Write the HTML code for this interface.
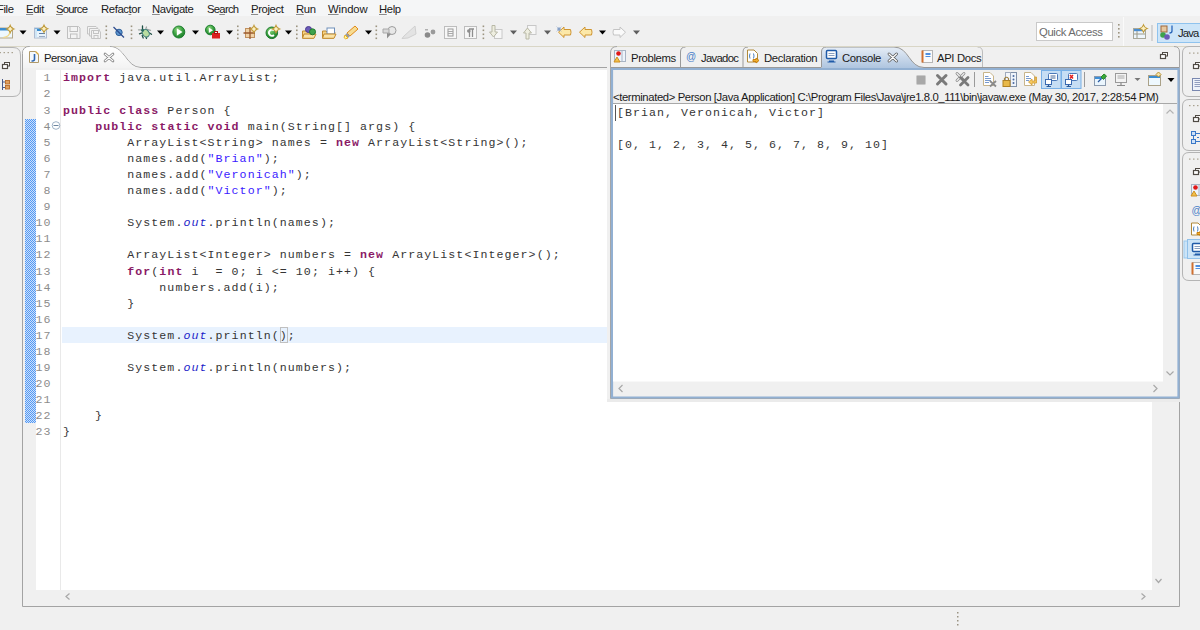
<!DOCTYPE html>
<html><head><meta charset="utf-8">
<style>
*{margin:0;padding:0;box-sizing:border-box}
html,body{width:1200px;height:630px;overflow:hidden;background:#f0f0f0;font-family:"Liberation Sans",sans-serif;font-size:11px;color:#000}
.a{position:absolute}
svg.a{left:0;top:0;overflow:visible}
.mi{position:absolute;top:2.7px;font-size:11.3px;letter-spacing:-0.4px;color:#1a1a1a;white-space:pre;line-height:13px}
.mi u{text-decoration:underline;text-decoration-color:#8a8a8a;text-underline-offset:0.6px}
.t{position:absolute;font-size:11.3px;letter-spacing:-0.35px;white-space:pre;line-height:13px;color:#1a1a1a}
#code,#lnum,#conout{position:absolute;font-family:"Liberation Mono",monospace;font-size:11.6px;letter-spacing:1.07px;line-height:16.09px;white-space:pre;color:#353535}
#code{left:63px;top:70.4px}
#lnum{left:35.5px;top:70.4px;color:#8c8c8c}
#conout{left:617px;top:105.2px;line-height:16px;letter-spacing:1.04px}
.k{color:#8a1a66;font-weight:bold}
.s{color:#3a1aff}
.f{color:#1a1ac8;font-style:italic}
</style></head><body>
<!-- MENU -->
<div class="a" style="left:0;top:0;width:1200px;height:16px;background:#f5f6f7"></div>
<span class="mi" style="left:-3px">File</span>
<span class="mi" style="left:26px"><u>E</u>dit</span>
<span class="mi" style="left:56px;letter-spacing:-0.75px"><u>S</u>ource</span>
<span class="mi" style="left:101px">Refac<u>t</u>or</span>
<span class="mi" style="left:152px"><u>N</u>avigate</span>
<span class="mi" style="left:207px;letter-spacing:-0.75px">Se<u>a</u>rch</span>
<span class="mi" style="left:251px"><u>P</u>roject</span>
<span class="mi" style="left:296px"><u>R</u>un</span>
<span class="mi" style="left:328px;letter-spacing:-0.1px"><u>W</u>indow</span>
<span class="mi" style="left:379px"><u>H</u>elp</span>

<!-- CHROME -->
<svg class="a" width="1200" height="630" viewBox="0 0 1200 630">
<defs>
<linearGradient id="gTab" x1="0" y1="0" x2="0" y2="1"><stop offset="0" stop-color="#ffffff"/><stop offset="1" stop-color="#f3f3f3"/></linearGradient>
<linearGradient id="gBlue" x1="0" y1="0" x2="0" y2="1"><stop offset="0" stop-color="#e6edf6"/><stop offset="1" stop-color="#a9c1dd"/></linearGradient>
<linearGradient id="gInact" x1="0" y1="0" x2="0" y2="1"><stop offset="0" stop-color="#f7f7f7"/><stop offset="1" stop-color="#eeeeee"/></linearGradient>
<pattern id="pDiff" width="2" height="2" patternUnits="userSpaceOnUse"><rect width="2" height="2" fill="#cde0fa"/><rect width="1" height="1" fill="#5399f5"/><rect x="1" y="1" width="1" height="1" fill="#5399f5"/></pattern>
</defs>
<!-- toolbar bottom line -->
<rect x="0" y="46" width="1200" height="1" fill="#d9d6c6"/>
<!-- quick access -->
<rect x="1036.5" y="22.5" width="76" height="18" fill="#fff" stroke="#c9c9c9"/>
<rect x="1123" y="17" width="1" height="29" fill="#fafafa"/>
<rect x="1157.5" y="23.5" width="50" height="19" fill="#cde5f8" stroke="#8fc3ee"/>
<rect x="1151.5" y="25" width="1" height="16" fill="#b8b8b8"/>

<!-- left trim -->
<path d="M-2,47.5 H13 Q20.5,47.5 20.5,55 V89 Q20.5,96.5 13,96.5 H-2" fill="#f0f0f0" stroke="#b4b4b4"/>

<!-- EDITOR frame -->
<path d="M22.5,606.5 V53.5 Q22.5,46.5 29.5,46.5 H110 C125,46.5 126,67.5 141,67.5 H1179.5 V606.5 Z" fill="#f0f0f0" stroke="#a3a3a3"/>
<path d="M23,68 V53.5 Q23,47 29.5,47 H110 C125,47 126,68 141,68 Z" fill="url(#gTab)"/>
<rect x="36" y="70" width="1116" height="520" fill="#fff"/>
<rect x="60" y="70" width="1" height="520" fill="#e9e9e9"/>
<rect x="25" y="119" width="11" height="304" fill="url(#pDiff)"/>
<rect x="62" y="327" width="545" height="16" fill="#e8f2fe"/>
<rect x="280.5" y="327.5" width="7" height="15" fill="none" stroke="#c0c0c0"/>
<!-- scroll arrows editor -->
<path d="M1155.5,579 L1158.5,582.5 L1161.5,579" fill="none" stroke="#a8a8a8" stroke-width="1.2"/>
<path d="M1141.5,593.5 L1145,596.5 L1141.5,599.5" fill="none" stroke="#a8a8a8" stroke-width="1.2"/>
<path d="M69.5,593.5 L66,596.5 L69.5,599.5" fill="none" stroke="#a8a8a8" stroke-width="1.2"/>
<!-- fold icon line 4 -->
<circle cx="56" cy="125.5" r="3.8" fill="#fff" stroke="#9fb3c8"/>
<rect x="53.5" y="125" width="5" height="1" fill="#6d86a0"/>

<!-- CONSOLE -->
<rect x="607" y="47" width="576" height="355" fill="#f0f0f0"/>
<rect x="607" y="399" width="573" height="3" fill="#ebebeb"/>
<path d="M610.5,398.5 V53 Q610.5,46.5 617,46.5 H1174 Q1179.5,46.5 1179.5,52 V398.5 Z" fill="#f0f0f0" stroke="#a5a5a5"/>
<!-- inactive tab separators -->
<path d="M680.5,67 V52 Q680.5,47 685.5,47" fill="none" stroke="#9a9a9a"/>
<path d="M743,67 V52 Q743,47 748,47" fill="none" stroke="#9a9a9a"/>
<!-- active console tab -->
<path d="M821.5,68 V52 Q821.5,47 826.5,47 H894 C909,47 909,67.5 924,67.5 H1179.5 V70 H611 V68 Z" fill="url(#gBlue)"/>
<path d="M821.5,67 V52 Q821.5,47 826.5,47 H894 C909,47 909,67.5 924,67.5 H1179" fill="none" stroke="#979797"/>
<path d="M611,67.5 H821.5" stroke="#9a9a9a"/>
<path d="M982.5,67 V52 Q982.5,47 977.5,47" fill="none" stroke="#bdbdbd"/>
<!-- blue frame -->
<path d="M612,69 H1178.5 V397.5 H612 Z" fill="none" stroke="#92b0d2" stroke-width="2.2"/>
<rect x="613" y="103" width="564" height="1" fill="#a8a8a8"/>
<rect x="613" y="104" width="550" height="277.5" fill="#fff"/>
<rect x="615" y="105" width="1" height="16" fill="#555"/>
<!-- console scroll arrows -->
<path d="M1166.5,113.5 L1170,110 L1173.5,113.5" fill="none" stroke="#b4b4b4" stroke-width="1.2"/>
<path d="M1166.5,371.5 L1170,375 L1173.5,371.5" fill="none" stroke="#a8a8a8" stroke-width="1.2"/>
<path d="M1153.5,385 L1157,388.5 L1153.5,392" fill="none" stroke="#a8a8a8" stroke-width="1.2"/>
<path d="M622.5,385 L619,388.5 L622.5,392" fill="none" stroke="#a8a8a8" stroke-width="1.2"/>
<!-- console toolbar selected buttons -->
<rect x="1041.5" y="70.5" width="19.5" height="18" fill="#c6def4" stroke="#78b0e6"/>
<rect x="1061.5" y="70.5" width="19.5" height="18" fill="#c6def4" stroke="#78b0e6"/>
<rect x="974" y="72" width="1" height="15" fill="#9a9a9a"/>
<rect x="1084" y="72" width="1" height="15" fill="#9a9a9a"/>

<rect x="30" y="46" width="80" height="1" fill="#d9d6c6"/>
<rect x="617" y="46" width="557" height="1" fill="#d9d6c6"/>
<!-- RIGHT trim -->
<path d="M1207,46.5 H1189 Q1182.5,46.5 1182.5,53 V90 Q1182.5,96.5 1189,96.5 H1207" fill="#f0f0f0" stroke="#b4b4b4"/>
<path d="M1207,99.5 H1189 Q1182.5,99.5 1182.5,106 V144 Q1182.5,150.5 1189,150.5 H1207" fill="#f0f0f0" stroke="#b4b4b4"/>
<path d="M1207,152.5 H1189 Q1182.5,152.5 1182.5,159 V274 Q1182.5,280.5 1189,280.5 H1207" fill="#f0f0f0" stroke="#b4b4b4"/>
<rect x="1184" y="241" width="20" height="17" fill="#cce4f7" stroke="#99c9ef"/>

<!-- status bar handle -->
<g fill="#9a9383"><rect x="957" y="612" width="1.5" height="1.5"/><rect x="957" y="616" width="1.5" height="1.5"/><rect x="957" y="620" width="1.5" height="1.5"/><rect x="957" y="624" width="1.5" height="1.5"/></g>
</svg>

<!-- ICONS1 -->
<svg class="a" width="1200" height="630" viewBox="0 0 1200 630">
<defs>
<radialGradient id="gGreen" cx="0.4" cy="0.3" r="0.7"><stop offset="0" stop-color="#8ad47a"/><stop offset="0.6" stop-color="#3aa040"/><stop offset="1" stop-color="#1e7e2c"/></radialGradient>
<g id="star"><path d="M0,-3.6 Q0.9,-0.9 3.6,0 Q0.9,0.9 0,3.6 Q-0.9,0.9 -3.6,0 Q-0.9,-0.9 0,-3.6 Z" fill="#fbefc0" stroke="#c09a38" stroke-width="1.1"/></g>
<g id="ddb"><path d="M0,0 H7 L3.5,4 Z" fill="#000"/></g>
<g id="ddg"><path d="M0,0 H7 L3.5,4 Z" fill="#5e5e5e"/></g>
<g id="sepd" fill="#9c9480"><rect x="0" y="0" width="1.6" height="1.6"/><rect x="0" y="4" width="1.6" height="1.6"/><rect x="0" y="8" width="1.6" height="1.6"/><rect x="0" y="12" width="1.6" height="1.6"/></g>
</defs>
<!-- 1 new window -->
<rect x="-1.5" y="28" width="14" height="10" fill="#eef8fe" stroke="#b3a788"/>
<rect x="-1" y="28" width="13" height="2.5" fill="#3b8dd0"/>
<path d="M10,31 Q10,37 3,37.5" fill="none" stroke="#f1d98a" stroke-width="1.2"/>
<use href="#star" x="10.2" y="29"/>
<use href="#ddb" x="19.5" y="30.5"/>
<!-- 3 new project -->
<rect x="34.5" y="28" width="12" height="10" fill="#e8f3fb" stroke="#aebbd0"/>
<rect x="35" y="28.5" width="6" height="2.5" fill="#3b8dd0"/>
<rect x="35" y="29" width="2" height="8.5" fill="#cfe6f6"/>
<rect x="39" y="33" width="6" height="1" fill="#5f7fa8"/>
<rect x="39" y="36" width="6" height="1" fill="#9aaac0"/>
<use href="#star" x="44" y="28.8"/>
<use href="#ddb" x="53.5" y="30.5"/>
<!-- 5 save -->
<g fill="none" stroke="#bfbfbf"><path d="M67.5,26.5 H78.5 L80,28 V38.5 H67.5 Z" fill="#f3f3f3"/><rect x="70" y="26.5" width="7.5" height="5"/><rect x="70.5" y="34" width="6.5" height="4.5"/></g>
<!-- 6 save all -->
<g fill="none" stroke="#c4c4c4"><path d="M87.5,26.5 H96 L97.5,28 V34 H87.5 Z" fill="#f3f3f3"/><path d="M89.5,28.5 H98 L99.5,30 V36 H89.5 Z" fill="#f3f3f3"/><path d="M91.5,30.5 H99 L100.5,32 V38.5 H91.5 Z" fill="#f3f3f3"/><rect x="93.5" y="30.5" width="5" height="3"/><rect x="94" y="35.5" width="4" height="3"/></g>
<use href="#sepd" x="105.5" y="25.5"/>
<!-- 8 skip bp -->
<circle cx="119" cy="32.4" r="3.2" fill="#5c96cf" stroke="#2e5f9a"/>
<path d="M113.5,27 L124,37.5" stroke="#2f4d8f" stroke-width="1.3"/>
<use href="#sepd" x="130.7" y="25.5"/>
<!-- 10 bug -->
<g stroke-width="1.3" stroke-linecap="round"><path d="M142.5,26 V29 M139.5,33.8 L142,32.8 M149.5,33 L151.5,34.3 M142.2,35.5 L143.2,38 M146,37 L146.5,38.5" stroke="#1f4f45"/><path d="M138.5,29.8 H142 M146.5,27 L145.8,29 M147.5,29.5 L150.5,30.3" stroke="#a0a8a4"/></g>
<ellipse cx="145.8" cy="33.2" rx="3.2" ry="4" transform="rotate(-35 145.8 33.2)" fill="#b9dca0" stroke="#3a7a78"/>
<circle cx="142.6" cy="30.2" r="1.5" fill="#2a6a60"/>
<use href="#ddb" x="157" y="30.5"/>
<!-- 12 run -->
<circle cx="178.8" cy="32" r="6" fill="url(#gGreen)" stroke="#1e8030"/>
<path d="M176.8,28.3 V35.7 L182.5,32 Z" fill="#fff"/>
<use href="#ddb" x="192" y="30.5"/>
<!-- 14 ext tools -->
<circle cx="210.3" cy="30" r="4.8" fill="url(#gGreen)" stroke="#1e8030"/>
<path d="M208.8,27.5 V33 L213,30.3 Z" fill="#fff"/>
<rect x="212" y="33" width="8" height="5.5" fill="#dc2121"/>
<rect x="214.5" y="31.5" width="3" height="2" fill="none" stroke="#b01010"/>
<use href="#ddb" x="226" y="30.5"/>
<use href="#sepd" x="237" y="25.5"/>
<!-- 17 package -->
<rect x="245.5" y="28.5" width="9" height="9" fill="#f0d2a6" stroke="#c09060"/>
<path d="M243.5,33 H255 M250,27 V39" stroke="#9a5a2e" stroke-width="1.3"/>
<use href="#star" x="254" y="29"/>
<!-- 18 C -->
<circle cx="271.8" cy="32.8" r="5.8" fill="url(#gGreen)" stroke="#1b7a2a"/>
<path d="M274,30.5 A3,3 0 1 0 274,35" fill="none" stroke="#fff" stroke-width="1.8"/>
<use href="#star" x="276" y="29"/>
<use href="#ddb" x="285" y="30.5"/>
<use href="#sepd" x="296" y="25.5"/>
<!-- 21 open type -->
<path d="M302.5,31 H306 L307,32 H315 L313,38 H302.5 Z" fill="#f4d285" stroke="#c28a2c"/>
<path d="M304,34 H316 L314,38.3 H302.5 Z" fill="#fbe3a6" stroke="#c28a2c"/>
<circle cx="308.5" cy="29.5" r="3" fill="#6b5bb8" stroke="#4a3a90"/>
<circle cx="312.5" cy="31.8" r="3" fill="#3ea34c" stroke="#217a30"/>
<!-- 22 open task -->
<path d="M322.5,31 H326 L327,32 H335 L333,38 H322.5 Z" fill="#f4d285" stroke="#c28a2c"/>
<rect x="327" y="28" width="7.5" height="6" fill="#fff" stroke="#6f8fba"/>
<path d="M324,34 H336 L334,38.3 H322.5 Z" fill="#fbe3a6" stroke="#c28a2c"/>
<!-- 23 marker -->
<path d="M355,26 L358,29 L350,36 L347,33 Z" fill="#f7dc92" stroke="#e08a18"/>
<path d="M347,33 L350,36 L348,38 L345,35 Z" fill="#9a9aa0"/>
<path d="M345,35 L348,38 L345.5,38.8 L344,37.5 Z" fill="#fff6a0" stroke="#e8b020"/>
<use href="#ddb" x="365" y="30.5"/>
<use href="#sepd" x="375.5" y="25.5"/>
<!-- 26 grey annotation -->
<circle cx="392" cy="30.5" r="4" fill="#e8e8e8" stroke="#9e9e9e"/>
<path d="M383,29 H389 V33 H383 Z" fill="#d8d8d8" stroke="#a8a8a8"/>
<path d="M387,33 L387,38.5 L391,34 Z" fill="#8e8e8e"/>
<!-- 27 grey pen -->
<path d="M415,26 L416,34 L408,38 L402,38.5 L404,36 Z" fill="#e3e3e3" stroke="#d0d0d0"/>
<!-- 28 glasses -->
<circle cx="427.5" cy="35" r="2.8" fill="#8a8a8a"/>
<circle cx="433" cy="32" r="2.4" fill="#9a9a9a"/>
<rect x="425" y="29" width="3" height="1.5" fill="#b0b0b0"/>
<!-- 29 block box -->
<rect x="444.5" y="26.5" width="12" height="12" fill="#f7f7f7" stroke="#bdbdbd"/>
<rect x="448" y="29" width="5" height="7" fill="none" stroke="#9a9a9a"/>
<path d="M448,31.5 H453 M448,33.5 H453" stroke="#aaa"/>
<!-- 30 pilcrow -->
<rect x="464.5" y="26.5" width="12" height="12" fill="#f7f7f7" stroke="#bdbdbd"/>
<path d="M469,29 H474 M469.5,29 V37 M472.5,29 V37" stroke="#8e8e8e" stroke-width="1.3"/>
<circle cx="468.8" cy="31" r="1.8" fill="#8e8e8e"/>
<use href="#sepd" x="482.6" y="25.5"/>
<!-- 32 next annot -->
<rect x="494.5" y="29.5" width="7.5" height="9" fill="#f7f7f7" stroke="#c8c8c8"/>
<path d="M492,25.5 H495 V32 H497.5 L493.5,37 L489.5,32 H492 Z" fill="#eeeee0" stroke="#b8b8a6"/>
<use href="#ddg" x="510" y="30.5"/>
<!-- 34 prev annot -->
<rect x="527.5" y="25.5" width="8.5" height="9" fill="#f7f7f7" stroke="#c8c8c8"/>
<path d="M526,39 H529 V33 H531.5 L527.5,28 L523.5,33 H526 Z" fill="#eeeee0" stroke="#b8b8a6"/>
<use href="#ddg" x="544" y="30.5"/>
<!-- 36 last edit -->
<path d="M570.5,29.5 H564 V27 L558.5,32.2 L564,37.5 V35 H570.5 Q571.5,32.2 570.5,29.5 Z" fill="#fce8a8" stroke="#cf9530"/>
<circle cx="559" cy="29" r="1.5" fill="#3a6ab0"/><path d="M556.5,26.5 L561.5,31.5 M561.5,26.5 L556.5,31.5" stroke="#a8b8d0" stroke-width="0.7"/>
<!-- 37 back -->
<path d="M591.5,29.5 H585 V27 L579.5,32.2 L585,37.5 V35 H591.5 Q592.5,32.2 591.5,29.5 Z" fill="#fce8a8" stroke="#cf9530"/>
<use href="#ddb" x="599" y="30.5"/>
<!-- 39 fwd -->
<path d="M613.5,29.5 H620 V27 L625.5,32.2 L620,37.5 V35 H613.5 Q612.5,32.2 613.5,29.5 Z" fill="#fafafa" stroke="#c4c4c4"/>
<use href="#ddg" x="633" y="30.5"/>
<!-- right toolbar -->
<use href="#sepd" x="1118" y="24"/>
<rect x="1133.5" y="28.5" width="12" height="10" fill="#eef6fc" stroke="#a8a89a"/>
<rect x="1134" y="29" width="11" height="2.2" fill="#4b8ed0"/>
<path d="M1137,31 V38 M1134,34 H1145" stroke="#9a9a8a"/>
<use href="#star" x="1143.5" y="28.5"/>
<!-- java persp icon -->
<rect x="1161" y="26" width="6" height="6" fill="#e6c8a0" stroke="#a0683a"/>
<circle cx="1163" cy="35" r="2.8" fill="#3ea34c"/>
<circle cx="1167" cy="37" r="2.8" fill="#6b5bb8"/>
<path d="M1172,25.5 V31 Q1172,33 1169.5,33" fill="none" stroke="#2a66b8" stroke-width="1.3"/>
</svg>

<!-- ICONS2 -->
<svg class="a" width="1200" height="630" viewBox="0 0 1200 630">
<defs>
<g id="rst"><rect x="2.5" y="0.5" width="5" height="3.5" fill="#fff" stroke="#4f4a44"/><rect x="0.5" y="2.5" width="5" height="4" fill="#fff" stroke="#4f4a44" stroke-width="1.2"/></g>
<g id="dots" fill="#a9a290"><rect x="0" y="0" width="1.5" height="1.2"/><rect x="4" y="0" width="1.5" height="1.2"/><rect x="8" y="0" width="1.5" height="1.2"/><rect x="12" y="0" width="1.5" height="1.2"/></g>
<g id="probs"><rect x="0.5" y="0.5" width="11" height="11" fill="#eef4fb" stroke="#a8b4c4"/><path d="M8,0.5 V11.5" stroke="#a8b4c4"/><circle cx="4.5" cy="3.5" r="2.3" fill="#e01818"/><path d="M0,12 L3,7 L6,12 Z" fill="#f2c04a" stroke="#d09020"/></g>
<g id="at"><text x="0.5" y="8.5" font-family="Liberation Sans" font-size="10" fill="#4a80c8">@</text></g>
<g id="decl"><path d="M0.5,0.5 H7 L10.5,4 V12.5 H0.5 Z" fill="#fff" stroke="#b08a3a"/><path d="M3,4 Q2,6.5 3,9 M6.5,4 Q7.5,6.5 6.5,9" fill="none" stroke="#4a7fc0"/><path d="M6,10 H9 V8.5 L12,11 L9,13.5 V12 H6 Z" fill="#f0b030" stroke="#c88010"/></g>
<g id="cons"><rect x="0.5" y="0.5" width="10" height="8" rx="1" fill="#fff" stroke="#1f5aa8" stroke-width="1.5"/><rect x="2.5" y="3" width="6" height="1" fill="#8aa0c0"/><rect x="2.5" y="5" width="6" height="1" fill="#8aa0c0"/><path d="M3,11 H8 M1.5,12 H9.5" stroke="#1f5aa8" stroke-width="1.2"/></g>
<g id="apid"><rect x="1.5" y="0.5" width="10" height="12" fill="#fafafa" stroke="#b5b5b5"/><rect x="0.5" y="0.5" width="2" height="12" fill="#d07030"/><rect x="4.5" y="3" width="5" height="2" fill="#4f8fe0"/><rect x="4.5" y="6" width="5" height="1" fill="#4f8fe0"/></g>
</defs>
<!-- left trim -->
<use href="#dots" x="-0.5" y="52"/>
<use href="#rst" x="2" y="62"/>
<path d="M2.5,79 V90" stroke="#4a5a8a"/>
<path d="M2.5,82 H5 M2.5,87.5 H5" stroke="#4a5a8a"/>
<rect x="5.5" y="80.5" width="4" height="3.5" fill="#e0a060" stroke="#b86a28" stroke-width="0.9"/>
<rect x="5.5" y="85.5" width="4" height="3.5" fill="#e0a060" stroke="#b86a28" stroke-width="0.9"/>
<!-- editor tab J icon -->
<path d="M29.5,51.5 H35.5 L38.5,54.5 V62.5 H29.5 Z" fill="#f4f8fc" stroke="#b09a6a"/>
<path d="M35.5,51.5 L38.5,54.5" stroke="#d8a838" stroke-width="1.3"/>
<path d="M34.5,54 V59 Q34.5,61 32.5,61 H31.5" fill="none" stroke="#2f66b0" stroke-width="1.6"/>
<!-- editor tab close -->
<path d="M105,54 L113,61 M113,54 L105,61" stroke="#7a7a7a" stroke-width="2.6" stroke-linecap="round"/>
<path d="M105,54 L113,61 M113,54 L105,61" stroke="#fff" stroke-width="1.1" stroke-linecap="round"/>
<!-- console tabs icons -->
<use href="#probs" x="614" y="50"/>
<use href="#at" x="685.5" y="51.5"/>
<use href="#decl" x="747" y="49.5"/>
<use href="#cons" x="826" y="50"/>
<path d="M889,54 L896.5,61 M896.5,54 L889,61" stroke="#555" stroke-width="2.8" stroke-linecap="round"/>
<path d="M889,54 L896.5,61 M896.5,54 L889,61" stroke="#fff" stroke-width="1.3" stroke-linecap="round"/>
<use href="#apid" x="921" y="50"/>
<!-- console restore -->
<use href="#rst" x="1160" y="52"/>
<!-- console toolbar -->
<rect x="916.5" y="75.5" width="9" height="9" rx="1" fill="#a8a8a8" stroke="#c8c8c8"/>
<path d="M937.5,75.5 L946,84 M946,75.5 L937.5,84" stroke="#7a7a7a" stroke-width="3" stroke-linecap="round"/>
<path d="M957,73.5 L964,80.5 M964,73.5 L957,80.5" stroke="#8a8a8a" stroke-width="2.8" stroke-linecap="round"/>
<path d="M957,73.5 L964,80.5 M964,73.5 L957,80.5" stroke="#f0f0f0" stroke-width="1.2" stroke-linecap="round"/>
<path d="M960.5,77.5 L968,85 M968,77.5 L960.5,85" stroke="#7a7a7a" stroke-width="2.8" stroke-linecap="round"/>
<!-- doc x -->
<path d="M983.5,72.5 H990 L993.5,76 V85.5 H983.5 Z" fill="#fff" stroke="#c8b48a"/>
<path d="M985,76.5 H988.5 M985,78.5 H991 M985,80.5 H991 M985,82.5 H989" stroke="#6a8fc8" stroke-width="0.9"/>
<path d="M990,81 L996,86.5 M996,81 L990,86.5" stroke="#8a8a8a" stroke-width="1.8"/>
<!-- lock -->
<rect x="1010.5" y="72.5" width="6" height="14" fill="#eef3fa" stroke="#8090a8"/>
<rect x="1005.5" y="72.5" width="5" height="13" fill="#f3f6fa" stroke="#a0aabc"/>
<circle cx="1013.5" cy="76" r="1" fill="#4a6aa0"/><circle cx="1013.5" cy="79.5" r="1" fill="#4a6aa0"/><circle cx="1013.5" cy="83" r="1" fill="#4a6aa0"/>
<rect x="1003" y="80.5" width="7" height="6" fill="#e8b848" stroke="#b08020"/>
<path d="M1004.5,80.5 V78.5 Q1006.5,76 1008.5,78.5 V80.5" fill="none" stroke="#a08040" stroke-width="1.2"/>
<!-- doc arrow -->
<path d="M1024.5,72.5 H1031 L1034.5,76 V85.5 H1024.5 Z" fill="#fff" stroke="#c8b48a"/>
<path d="M1026,76.5 H1029 M1026,78.5 H1031 M1026,80.5 H1029" stroke="#6a8fc8" stroke-width="0.9"/>
<path d="M1036.5,77 V83 H1032 V85 L1028.5,82 L1032,79 V81 H1035 V77 Z" fill="#f5c860" stroke="#d09a30" stroke-width="0.8"/>
<!-- selected buttons -->
<g transform="translate(1045,72)"><rect x="3.5" y="1.5" width="9" height="7" rx="1" fill="#fff" stroke="#4a78b8"/><path d="M5.5,4 H10.5 M5.5,6 H10.5" stroke="#4a6a98"/><rect x="0.5" y="7.5" width="6" height="5" fill="#fff" stroke="#3a6ab0"/><path d="M1.5,14.5 H6 M3.5,12.5 V14.5" stroke="#2a5a98" stroke-width="1.2"/></g>
<g transform="translate(1065,72)"><rect x="3.5" y="1.5" width="9" height="7" rx="1" fill="#fff" stroke="#4a78b8"/><path d="M5,3 L8,6.5 M8,3 L5,6.5" stroke="#e02020" stroke-width="1.5"/><rect x="0.5" y="7.5" width="6" height="5" fill="#fff" stroke="#3a6ab0"/><path d="M1.5,14.5 H6 M3.5,12.5 V14.5" stroke="#2a5a98" stroke-width="1.2"/></g>
<!-- pin -->
<rect x="1094.5" y="76.5" width="11" height="9" fill="#eaf5fd" stroke="#8a9aae"/>
<rect x="1095" y="77" width="10" height="2" fill="#3d8ed6"/>
<path d="M1098,82 L1101.5,78.5" stroke="#2a5aa0" stroke-width="1.2"/>
<path d="M1101,77 L1104,74 L1106.5,76 L1103.5,79.5 Z" fill="#3aa83a" stroke="#2a8a2a"/>
<!-- monitor grey -->
<rect x="1115.5" y="73.5" width="11" height="9" fill="#f3f3f3" stroke="#9a9a9a"/>
<path d="M1117.5,76 H1124.5 M1117.5,78 H1124.5" stroke="#aaa"/>
<path d="M1117,85.5 H1125 M1121,82.5 V85.5" stroke="#8a8a8a" stroke-width="1.2"/>
<path d="M1134.5,78 H1140.5 L1137.5,81 Z" fill="#777"/>
<!-- new console -->
<rect x="1148.5" y="75.5" width="12" height="10" fill="#eef8fe" stroke="#aaa188"/>
<rect x="1149" y="76" width="11" height="2" fill="#3b8dd0"/>
<path d="M1158.5,72 L1161,74.5 L1158.5,77 L1156,74.5 Z" fill="#f6e3a6" stroke="#b8902f"/>
<path d="M1167.5,78 H1174.5 L1171,82 Z" fill="#000"/>
<!-- right trim icons -->
<use href="#dots" x="1189" y="52.5"/>
<use href="#rst" x="1193" y="62"/>
<g transform="translate(1192,78)"><rect x="0.5" y="0.5" width="10" height="12" fill="#eef2fa" stroke="#7a88b0"/><path d="M2.5,2.5 H9 M2.5,4.5 H9 M2.5,6.5 H9 M2.5,8.5 H9" stroke="#7a88b0" stroke-width="0.8"/></g>
<use href="#dots" x="1189" y="105"/>
<use href="#rst" x="1193" y="115"/>
<g transform="translate(1191,131)"><rect x="0.5" y="0.5" width="4" height="4" fill="#cfe2f8" stroke="#3a78c8"/><rect x="0.5" y="8.5" width="4" height="4" fill="#cfe2f8" stroke="#3a78c8"/><path d="M4.5,2.5 H10 M4.5,10.5 H10 M2.5,4.5 V8.5 M6,6.5 H8" stroke="#3a78c8"/></g>
<use href="#dots" x="1189" y="158.5"/>
<use href="#rst" x="1193" y="168"/>
<use href="#probs" x="1191" y="184"/>
<use href="#at" x="1191" y="205"/>
<use href="#decl" x="1191" y="222.5"/>
<rect x="1187.5" y="239.5" width="16" height="19" fill="#cce4f7" stroke="#8fc0ea"/>
<use href="#cons" x="1192" y="243"/>
<use href="#apid" x="1191" y="262"/>
</svg>

<!-- editor text -->
<span class="t" style="left:44px;top:51.7px;letter-spacing:-0.55px">Person.java</span>
<div id="lnum"> 1
 2
 3
 4
 5
 6
 7
 8
 9
10
11
12
13
14
15
16
17
18
19
20
21
22
23</div>
<div id="code"><span class="k">import</span> java.util.ArrayList;

<span class="k">public</span> <span class="k">class</span> Person {
    <span class="k">public</span> <span class="k">static</span> <span class="k">void</span> main(String[] args) {
        ArrayList&lt;String&gt; names = <span class="k">new</span> ArrayList&lt;String&gt;();
        names.add(<span class="s">"Brian"</span>);
        names.add(<span class="s">"Veronicah"</span>);
        names.add(<span class="s">"Victor"</span>);

        System.<span class="f">out</span>.println(names);

        ArrayList&lt;Integer&gt; numbers = <span class="k">new</span> ArrayList&lt;Integer&gt;();
        <span class="k">for</span>(<span class="k">int</span> i  = 0; i &lt;= 10; i++) {
            numbers.add(i);
        }

        System.<span class="f">out</span>.println();

        System.<span class="f">out</span>.println(numbers);


    }
}</div>

<!-- console text -->
<div id="conout">[Brian, Veronicah, Victor]

[0, 1, 2, 3, 4, 5, 6, 7, 8, 9, 10]</div>
<span class="t" style="left:613px;top:90.7px;letter-spacing:-0.39px">&lt;terminated&gt; Person [Java Application] C:\Program Files\Java\jre1.8.0_111\bin\javaw.exe (May 30, 2017, 2:28:54 PM)</span>
<span class="t" style="left:631px;top:51.7px">Problems</span>
<span class="t" style="left:701px;top:51.7px;letter-spacing:-0.7px">Javadoc</span>
<span class="t" style="left:764px;top:51.7px">Declaration</span>
<span class="t" style="left:842px;top:51.7px">Console</span>
<span class="t" style="left:937px;top:51.7px">API Docs</span>

<span class="t" style="left:1039px;top:25.5px;color:#6b6b6b">Quick Access</span>
<span class="t" style="left:1178px;top:26.7px;letter-spacing:-0.9px">Java</span>
</body></html>
